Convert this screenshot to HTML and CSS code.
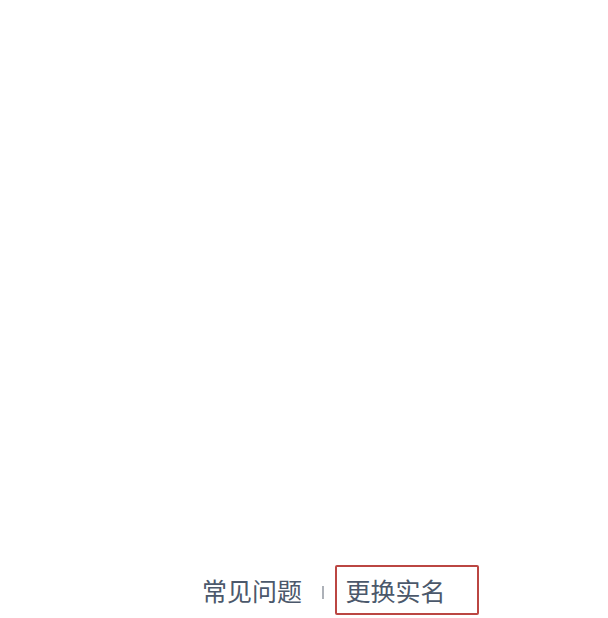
FILE: index.html
```html
<!DOCTYPE html>
<html lang="zh">
<head>
<meta charset="utf-8">
<link rel="stylesheet" href="styles.css">
</head>
<body>
<div class="page">
  <div class="footer">
    <span class="link">常见问题</span>
    <span class="sep"></span>
    <span class="link boxed">更换实名</span>
  </div>
</div>
</body>
</html>
```
FILE: styles.css
```css
html, body {
  margin: 0;
  padding: 0;
  background: #ffffff;
}
.page {
  width: 608px;
  height: 618px;
  display: flex;
  flex-direction: column;
  justify-content: flex-end;
  font-family: "Noto Sans CJK SC", "Noto Sans", sans-serif;
}
.footer {
  display: flex;
  align-items: center;
  padding-left: 202px;
  padding-bottom: 3px;
}
.link {
  font-size: 25px;
  line-height: 30px;
  color: #4b586b;
}
.sep {
  width: 1.5px;
  height: 13px;
  background: #adb1b8;
  margin: 4px 11px 0 20px;
}
.boxed {
  width: 131px;
  height: 46px;
  display: flex;
  align-items: center;
  padding-left: 9px;
  border: 2px solid #bb4642;
  border-radius: 2px;
  box-sizing: content-box;
}
```
